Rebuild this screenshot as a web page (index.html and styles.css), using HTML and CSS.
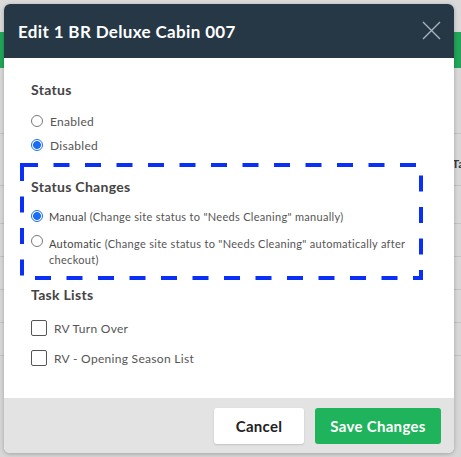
FILE: index.html
```html
<!DOCTYPE html>
<html>
<head>
<meta charset="utf-8">
<link rel="stylesheet" href="styles.css">
</head>
<body>
<div class="page">
  <div class="topbar"></div>
  <div class="greenbar"></div>
  <div class="row r1"></div>
  <div class="row r2"><span class="bgtext">Ta</span></div>
  <div class="row r3"></div>
  <div class="row r4"></div>
  <div class="row r5"></div>
  <div class="row r6"></div>
  <div class="row r7"></div>
</div>

<div class="modal">
  <div class="modal-header">
    <h1 class="title">Edit 1 BR Deluxe Cabin 007</h1>
    <span class="close">
      <svg width="19" height="19" viewBox="0 0 19 19"><path d="M1 1 L18 18 M18 1 L1 18" stroke="#aab3bb" stroke-width="1.4" fill="none"/></svg>
    </span>
  </div>
  <div class="modal-body">
    <section class="group">
      <h2 class="heading">Status</h2>
      <label class="opt"><span class="radio"></span><span class="lbl">Enabled</span></label>
      <label class="opt"><span class="radio on"></span><span class="lbl">Disabled</span></label>
    </section>
    <section class="group g2">
      <h2 class="heading">Status Changes</h2>
      <label class="opt small"><span class="radio on"></span><span class="lbl"><span class="strong">Manual</span> (Change site status to "Needs Cleaning" manually)</span></label>
      <label class="opt small multi"><span class="radio"></span><span class="lbl"><span class="strong">Automatic</span> (Change site status to "Needs Cleaning" automatically after checkout)</span></label>
    </section>
    <section class="group g3">
      <h2 class="heading">Task Lists</h2>
      <label class="chk"><span class="box"></span><span class="lbl">RV Turn Over</span></label>
      <label class="chk"><span class="box"></span><span class="lbl">RV - Opening Season List</span></label>
    </section>
  </div>
  <div class="modal-footer">
    <button class="btn cancel">Cancel</button>
    <button class="btn save">Save Changes</button>
  </div>
</div>

<svg class="annot" width="405" height="119" viewBox="0 0 405 119">
  <rect x="2" y="2" width="399" height="113" fill="none" stroke="#0a2ff6" stroke-width="4" stroke-dasharray="16 15.5"/>
</svg>
</body>
</html>
```

FILE: styles.css
```css
* { box-sizing: border-box; }
html, body { margin: 0; padding: 0; }
body {
  width: 461px;
  height: 457px;
  overflow: hidden;
  background: #d7d7d7;
  font-family: "Lato", "Liberation Sans", sans-serif;
  letter-spacing: 0.3px;
  position: relative;
}
.page { display: flex; flex-direction: column; }
.topbar { height: 32px; background: #dadada; }
.greenbar { height: 36px; background: #22a659; }
.row { height: 33px; border-bottom: 1px solid #c4c4c4; background: #d8d8d8; position: relative; }
.r1 { height: 66px; }
.r2 { height: 52px; }
.r3 { height: 38px; }
.bgtext { position: absolute; left: 452px; top: 22px; font-size: 12px; font-weight: 700; color: #3a3a3a; }

.modal {
  position: absolute;
  left: 4px;
  top: 4px;
  width: 450px;
  height: 449px;
  background: #fff;
  border-radius: 6px;
  overflow: hidden;
  display: flex;
  flex-direction: column;
  box-shadow: 0 1px 4px rgba(0,0,0,0.25);
}
.modal-header {
  height: 54px;
  flex: none;
  background: #263746;
  display: flex;
  align-items: center;
  justify-content: space-between;
  padding: 0 13px 0 14px;
}
.title {
  margin: 0;
  color: #fff;
  font-size: 17px;
  font-weight: 700;
  letter-spacing: 0.35px;
}
.close { display: flex; margin-top: -1px; }

.modal-body {
  flex: 1;
  padding: 22px 27px 0;
  color: #4a4a4a;
}
.group { display: flex; flex-direction: column; }
.heading {
  margin: 0;
  font-size: 14px;
  line-height: 20px;
  font-weight: 700;
  color: #444;
}
.group .heading { margin-bottom: 9px; }
.g2 { margin-top: 20px; }
.g2 .heading { margin-bottom: 7px; }
.g3 { margin-top: 17px; }
.g3 .heading { margin-bottom: 8px; }

.opt {
  display: flex;
  align-items: center;
  height: 24px;
  gap: 7px;
  font-size: 12px;
  color: #555;
}
.opt.small { font-size: 11px; gap: 6px; }
.opt.multi { height: auto; align-items: flex-start; line-height: 16px; margin-top: 8px; }
.opt.multi .radio { margin-top: -1px; }
.strong { color: #444; }
.radio {
  flex: none;
  width: 12px;
  height: 12px;
  border-radius: 50%;
  border: 1px solid #7a7a7a;
  background: #fff;
}
.radio.on {
  border: 1px solid #1d6ff2;
  background: radial-gradient(circle, #1a6df5 0 3.6px, #fff 4.2px);
}

.chk {
  display: flex;
  align-items: center;
  height: 30px;
  gap: 7px;
  font-size: 12px;
  color: #555;
}
.box {
  flex: none;
  width: 16px;
  height: 16px;
  border: 1px solid #555;
  border-radius: 2px;
  background: #fff;
}

.modal-footer {
  height: 55px;
  flex: none;
  background: #e3e3e3;
  display: flex;
  align-items: center;
  justify-content: flex-end;
  gap: 11px;
  padding-right: 13px;
}
.btn {
  height: 36px;
  border: none;
  border-radius: 3px;
  font-family: "Lato", "Liberation Sans", sans-serif;
  font-size: 15px;
  font-weight: 700;
  letter-spacing: 0.3px;
  padding: 0;
}
.cancel {
  width: 90px;
  background: #fff;
  color: #222;
  box-shadow: 0 1px 2px rgba(0,0,0,0.15);
}
.save {
  width: 126px;
  background: #1fb35b;
  color: #fff;
}

.annot {
  position: absolute;
  left: 20px;
  top: 163px;
}
```
